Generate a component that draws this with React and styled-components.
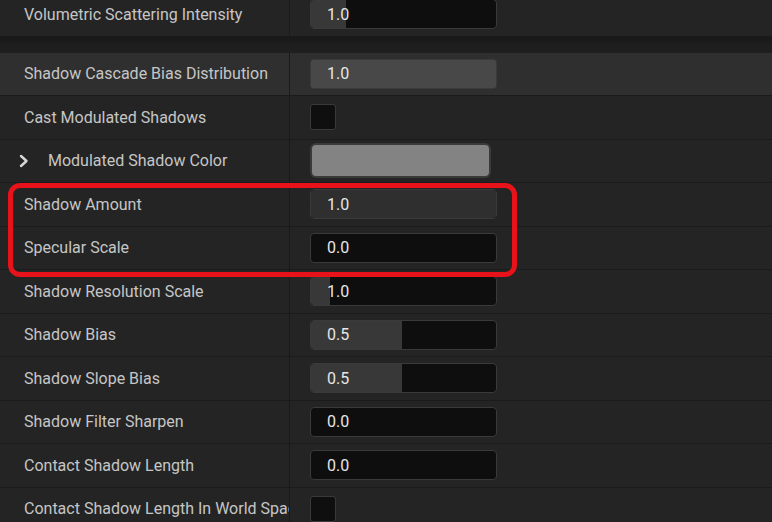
import React from "react";
import styled, { createGlobalStyle } from "styled-components";

const GlobalStyle = createGlobalStyle`
  html, body {
    margin: 0;
    padding: 0;
    background: #242424;
  }
  body {
    font-family: Roboto, "Noto Sans", "Liberation Sans", sans-serif;
  }
`;

const topRows = [{ label: "Volumetric Scattering Intensity", kind: "slider", value: "1.0", fill: 0.19 }];

const rows = [
  { label: "Shadow Cascade Bias Distribution", kind: "slider", value: "1.0", fill: 1, hover: true },
  { label: "Cast Modulated Shadows", kind: "check" },
  { label: "Modulated Shadow Color", kind: "color", expand: true },
  { label: "Shadow Amount", kind: "slider", value: "1.0", fill: 1, soft: true },
  { label: "Specular Scale", kind: "slider", value: "0.0", fill: 0 },
  { label: "Shadow Resolution Scale", kind: "slider", value: "1.0", fill: 0.1 },
  { label: "Shadow Bias", kind: "slider", value: "0.5", fill: 0.49 },
  { label: "Shadow Slope Bias", kind: "slider", value: "0.5", fill: 0.49 },
  { label: "Shadow Filter Sharpen", kind: "slider", value: "0.0", fill: 0 },
  { label: "Contact Shadow Length", kind: "slider", value: "0.0", fill: 0 },
  { label: "Contact Shadow Length In World Space", kind: "check" },
];

const Page = styled.div`
  position: relative;
  width: 772px;
  height: 522px;
  overflow: hidden;
  background: #242424;
`;

const List = styled.div`
  margin-top: -7px;
  display: flex;
  flex-direction: column;
`;

const Gap = styled.div`
  height: 16px;
  background: linear-gradient(#181818, #1d1d1d 40%, #1f1f1f);
`;

const Row = styled.div`
  display: grid;
  grid-template-columns: 290px 1fr;
  height: 43.5px;
  box-sizing: border-box;
  border-bottom: 1px solid #1b1b1b;
  background: ${(p) => (p.$hover ? "#2f2f2f" : "#242424")};
`;

const Label = styled.div`
  display: flex;
  align-items: center;
  gap: 19px;
  padding-left: ${(p) => (p.$expand ? "19px" : "24px")};
  border-right: 1px solid #1a1a1a;
  color: #c6c6c6;
  font-size: 16px;
  white-space: nowrap;
  overflow: hidden;
`;

const Value = styled.div`
  display: flex;
  align-items: center;
  padding-left: 20px;
`;

const SliderBox = styled.div`
  position: relative;
  width: 187px;
  height: 30px;
  box-sizing: border-box;
  border: 1px solid #3a3a3a;
  border-radius: 4px;
  overflow: hidden;
  background: ${(p) => (p.$hover ? "#484848" : "#0e0e0e")};
  display: flex;
  align-items: center;
`;

const Fill = styled.div`
  position: absolute;
  left: 0;
  top: 0;
  bottom: 0;
  background: ${(p) => (p.$soft ? "#2f2f2f" : p.$hover ? "#484848" : "#383838")};
`;

const Number = styled.span`
  position: relative;
  padding-left: 16px;
  color: #e6e6e6;
  font-size: 16px;
`;

const Check = styled.div`
  width: 26px;
  height: 26px;
  box-sizing: border-box;
  border: 1px solid #3a3a3a;
  border-radius: 3px;
  background: #0f0f0f;
`;

const Swatch = styled.div`
  width: 181px;
  height: 35px;
  box-sizing: border-box;
  border: 2px solid #3a3a3a;
  border-radius: 6px;
  background: #838383;
`;

const Highlight = styled.div`
  position: absolute;
  left: 8px;
  top: 183px;
  width: 509px;
  height: 94px;
  box-sizing: border-box;
  border: 5px solid #e8121a;
  border-radius: 12px;
  pointer-events: none;
`;

const Chevron = () => (
  <svg width="10" height="14" viewBox="0 0 10 14">
    <path d="M2 2 L7.5 7 L2 12" fill="none" stroke="#d8d8d8" strokeWidth="2.4" strokeLinecap="round" strokeLinejoin="round" />
  </svg>
);

const Property = ({ row }) => (
  <Row $hover={row.hover}>
    <Label $expand={row.expand}>
      {row.expand && <Chevron />}
      {row.label}
    </Label>
    <Value>
      {row.kind === "slider" && (
        <SliderBox $hover={row.hover}>
          <Fill $soft={row.soft} $hover={row.hover} style={{ width: `${row.fill * 100}%` }} />
          <Number>{row.value}</Number>
        </SliderBox>
      )}
      {row.kind === "check" && <Check />}
      {row.kind === "color" && <Swatch />}
    </Value>
  </Row>
);

export default function App() {
  return (
    <Page>
      <GlobalStyle />
      <List>
        {topRows.map((r) => (
          <Property key={r.label} row={r} />
        ))}
        <Gap />
        {rows.map((r) => (
          <Property key={r.label} row={r} />
        ))}
      </List>
      <Highlight />
    </Page>
  );
}
